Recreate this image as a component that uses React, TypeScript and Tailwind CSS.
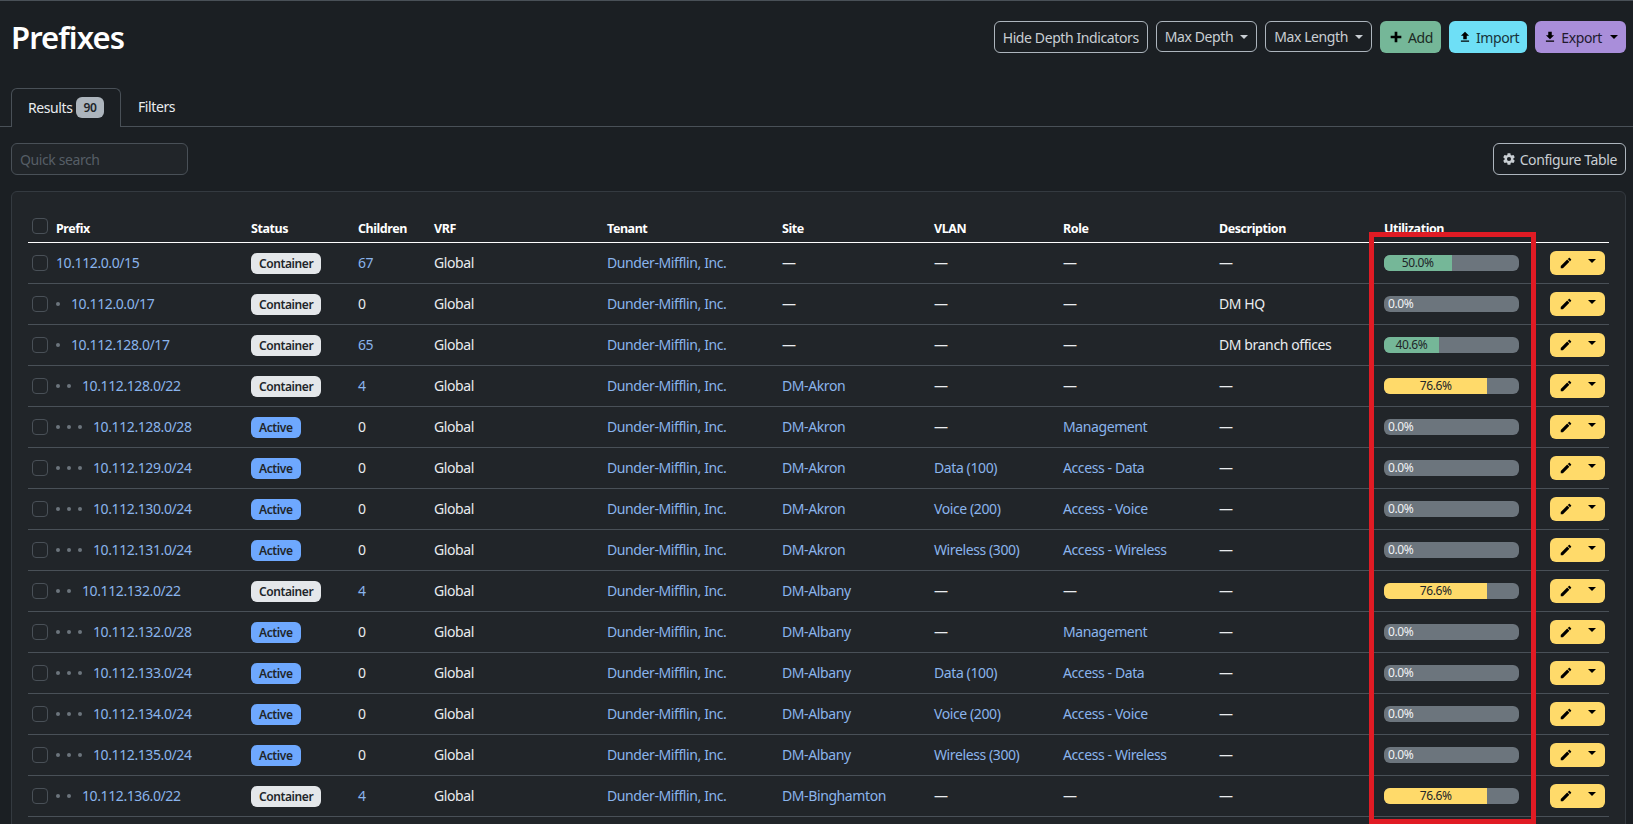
const font = { fontFamily: '"Noto Sans", "Open Sans", sans-serif' };

type Row = {
  prefix: string;
  depth: number;
  status: "Container" | "Active";
  children: number;
  site?: string;
  vlan?: string;
  role?: string;
  description?: string;
  util: number;
};

const rows: Row[] = [
  { prefix: "10.112.0.0/15", depth: 0, status: "Container", children: 67, util: 50.0 },
  { prefix: "10.112.0.0/17", depth: 1, status: "Container", children: 0, description: "DM HQ", util: 0 },
  { prefix: "10.112.128.0/17", depth: 1, status: "Container", children: 65, description: "DM branch offices", util: 40.6 },
  { prefix: "10.112.128.0/22", depth: 2, status: "Container", children: 4, site: "DM-Akron", util: 76.6 },
  { prefix: "10.112.128.0/28", depth: 3, status: "Active", children: 0, site: "DM-Akron", role: "Management", util: 0 },
  { prefix: "10.112.129.0/24", depth: 3, status: "Active", children: 0, site: "DM-Akron", vlan: "Data (100)", role: "Access - Data", util: 0 },
  { prefix: "10.112.130.0/24", depth: 3, status: "Active", children: 0, site: "DM-Akron", vlan: "Voice (200)", role: "Access - Voice", util: 0 },
  { prefix: "10.112.131.0/24", depth: 3, status: "Active", children: 0, site: "DM-Akron", vlan: "Wireless (300)", role: "Access - Wireless", util: 0 },
  { prefix: "10.112.132.0/22", depth: 2, status: "Container", children: 4, site: "DM-Albany", util: 76.6 },
  { prefix: "10.112.132.0/28", depth: 3, status: "Active", children: 0, site: "DM-Albany", role: "Management", util: 0 },
  { prefix: "10.112.133.0/24", depth: 3, status: "Active", children: 0, site: "DM-Albany", vlan: "Data (100)", role: "Access - Data", util: 0 },
  { prefix: "10.112.134.0/24", depth: 3, status: "Active", children: 0, site: "DM-Albany", vlan: "Voice (200)", role: "Access - Voice", util: 0 },
  { prefix: "10.112.135.0/24", depth: 3, status: "Active", children: 0, site: "DM-Albany", vlan: "Wireless (300)", role: "Access - Wireless", util: 0 },
  { prefix: "10.112.136.0/22", depth: 2, status: "Container", children: 4, site: "DM-Binghamton", util: 76.6 },
];

function Mdi({ d, className }: { d: string; className: string }) {
  return (
    <svg viewBox="0 0 24 24" fill="currentColor" className={className}>
      <path d={d} />
    </svg>
  );
}

const icons = {
  pencil: "M20.71,7.04C21.1,6.65 21.1,6 20.71,5.63L18.37,3.29C18,2.9 17.35,2.9 16.96,3.29L15.12,5.12L18.87,8.87M3,17.25V21H6.75L17.81,9.93L14.06,6.18L3,17.25Z",
  plus: "M20 14H14V20H10V14H4V10H10V4H14V10H20V14Z",
  upload: "M9,16V10H5L12,3L19,10H15V16H9M5,20V18H19V20H5Z",
  download: "M5,20H19V18H5M19,9H15V3H9V9H5L12,16L19,9Z",
  cog: "M12,15.5A3.5,3.5 0 0,1 8.5,12A3.5,3.5 0 0,1 12,8.5A3.5,3.5 0 0,1 15.5,12A3.5,3.5 0 0,1 12,15.5M19.43,12.97C19.47,12.65 19.5,12.33 19.5,12C19.5,11.67 19.47,11.34 19.43,11L21.54,9.37C21.73,9.22 21.78,8.95 21.66,8.73L19.66,5.27C19.54,5.05 19.27,4.96 19.05,5.05L16.56,6.05C16.04,5.66 15.5,5.32 14.87,5.07L14.5,2.42C14.46,2.18 14.25,2 14,2H10C9.75,2 9.54,2.18 9.5,2.42L9.13,5.07C8.5,5.32 7.96,5.66 7.44,6.05L4.95,5.05C4.73,4.96 4.46,5.05 4.34,5.27L2.34,8.73C2.21,8.95 2.27,9.22 2.46,9.37L4.57,11C4.53,11.34 4.5,11.67 4.5,12C4.5,12.33 4.53,12.65 4.57,12.97L2.46,14.63C2.27,14.78 2.21,15.05 2.34,15.27L4.34,18.73C4.46,18.95 4.73,19.03 4.95,18.95L7.44,17.94C7.96,18.34 8.5,18.68 9.13,18.93L9.5,21.58C9.54,21.82 9.75,22 10,22H14C14.25,22 14.46,21.82 14.5,21.58L14.87,18.93C15.5,18.67 16.04,18.34 16.56,17.94L19.05,18.95C19.27,19.03 19.54,18.95 19.66,18.73L21.66,15.27C21.78,15.05 21.73,14.78 21.54,14.63L19.43,12.97Z",
};

function Caret({ className = "" }: { className?: string }) {
  return <span className={`inline-block h-0 w-0 border-x-[4px] border-t-[4.5px] border-x-transparent border-t-current ${className}`} />;
}

function Checkbox({ className = "" }: { className?: string }) {
  return <span className={`block h-4 w-4 rounded-[4px] border border-[#495057] bg-[#212529] ${className}`} />;
}

function Progress({ util }: { util: number }) {
  const label = `${util.toFixed(1)}%`;
  const fill = util >= 75 ? "bg-[#ffda6a]" : "bg-[#75b798]";
  return (
    <div className="flex h-4 w-[135px] overflow-hidden rounded-md bg-[#6c757d] text-[12px] leading-4 tracking-[-0.03em]">
      {util > 0 ? (
        <div className={`${fill} text-center text-[#212529]`} style={{ width: `${util}%` }}>
          {label}
        </div>
      ) : (
        <div className="pl-1 text-[#f0f2f4]">{label}</div>
      )}
    </div>
  );
}

function Dash() {
  return <span className="text-[#e9ecef]">—</span>;
}

function LinkOrDash({ value }: { value?: string }) {
  return value ? <span className="text-[#8ab4ec]">{value}</span> : <Dash />;
}

export default function App() {
  return (
    <div style={font} className="relative h-[824px] overflow-hidden border-t border-[#495057] bg-[#1b1f23] tracking-[-0.025em] text-[#e9ecef]">
      {/* Page header */}
      <div className="flex items-start justify-between pl-[11px] pr-[7px] pt-5">
        <h1 className="-mt-[2px] text-[31px] leading-[36px] font-semibold tracking-[-0.03em] text-white">Prefixes</h1>
        <div className="flex items-start gap-2 text-[14px] leading-[21px] text-[#c9ced3]">
          <button className="h-8 rounded-md border border-[#adb5bd] px-2">Hide Depth Indicators</button>
          <button className="flex h-[31px] items-center gap-[7px] rounded-md border border-[#adb5bd] px-2">
            Max Depth <Caret />
          </button>
          <button className="flex h-[31px] items-center gap-[7px] rounded-md border border-[#adb5bd] px-2">
            Max Length <Caret />
          </button>
          <button className="flex h-8 items-center gap-1 rounded-md bg-[#75b798] px-2 text-[#1c2a23]">
            <Mdi d={icons.plus} className="h-4 w-4 text-black" /> Add
          </button>
          <button className="flex h-8 items-center gap-1 rounded-md bg-[#6edff6] pl-[9px] pr-2 text-[#16333a]">
            <Mdi d={icons.upload} className="h-3.5 w-3.5 text-black" /> Import
          </button>
          <button className="flex h-8 items-center gap-1 rounded-md bg-[#a98eda] px-2 text-[#211a2e]">
            <Mdi d={icons.download} className="h-3.5 w-3.5 text-black" /> Export <Caret className="ml-1 text-black" />
          </button>
        </div>
      </div>

      {/* Tabs */}
      <div className="mt-[33px] flex h-[39px] items-end border-b border-[#495057] pl-[11px] text-[14px] text-[#e9ecef]">
        <div className="-mb-px flex h-[39px] w-[110px] items-center gap-[3px] rounded-t-md border border-b-0 border-[#495057] bg-[#1b1f23] pl-4 pb-px">
          Results
          <span className="h-[21px] rounded-md bg-[#adb5bd] px-2 text-[12px] leading-[21px] font-semibold text-[#212529]">90</span>
        </div>
        <div className="flex h-[39px] items-center pl-[17px]">Filters</div>
      </div>

      {/* Table controls */}
      <div className="flex items-center justify-between pl-[11px] pr-[7px] pt-4">
        <div className="flex h-8 w-[177px] items-center rounded-md border border-[#495057] bg-[#212529] px-2 text-[14px] text-[#565e66]">
          Quick search
        </div>
        <button className="flex h-8 items-center gap-1 rounded-md border border-[#adb5bd] px-2 text-[14px] text-[#c9ced3]">
          <Mdi d={icons.cog} className="h-3.5 w-3.5" /> Configure Table
        </button>
      </div>

      {/* Table card */}
      <div className="ml-[11px] mr-[7px] mt-4 rounded-md border border-[#343a40] bg-[#212529] px-4 pb-10 pt-4">
        <table className="w-[1581px] table-fixed text-left text-[14px]">
          <colgroup>
            <col className="w-[223px]" />
            <col className="w-[107px]" />
            <col className="w-[76px]" />
            <col className="w-[173px]" />
            <col className="w-[175px]" />
            <col className="w-[152px]" />
            <col className="w-[129px]" />
            <col className="w-[156px]" />
            <col className="w-[165px]" />
            <col className="w-[166px]" />
            <col className="w-[59px]" />
          </colgroup>
          <thead>
            <tr className="h-[34px] border-b border-white align-bottom text-[12.5px] text-white">
              <th className="pb-[3px] pl-1 font-bold">
                <div className="flex items-end gap-2">
                  <Checkbox className="mb-[5px]" />
                  <span className="tracking-[-0.035em]">Prefix</span>
                </div>
              </th>
              <th className="pb-[3px] font-bold tracking-[-0.035em]">Status</th>
              <th className="pb-[3px] font-bold tracking-[-0.035em]">Children</th>
              <th className="pb-[3px] font-bold tracking-[-0.035em]">VRF</th>
              <th className="pb-[3px] font-bold tracking-[-0.035em]">Tenant</th>
              <th className="pb-[3px] font-bold tracking-[-0.035em]">Site</th>
              <th className="pb-[3px] font-bold tracking-[-0.035em]">VLAN</th>
              <th className="pb-[3px] font-bold tracking-[-0.035em]">Role</th>
              <th className="pb-[3px] font-bold tracking-[-0.035em]">Description</th>
              <th className="pb-[3px] font-bold tracking-[-0.035em]">Utilization</th>
              <th />
            </tr>
          </thead>
          <tbody>
            {rows.map((r) => (
              <tr key={r.prefix} className="h-[41px] border-b border-[#495057]">
                <td className="pl-1">
                  <div className="flex items-center">
                    <Checkbox />
                    <span className="ml-2 flex items-center">
                      {Array.from({ length: r.depth }).map((_, i) => (
                        <span key={i} className="mr-[7px] h-1 w-1 rounded-full bg-[#6c757d]" />
                      ))}
                    </span>
                    <span className={`text-[#8ab4ec] ${r.depth > 0 ? "ml-1" : ""}`}>{r.prefix}</span>
                  </div>
                </td>
                <td>
                  <span
                    className={`inline-block h-[21px] rounded-md px-2 text-[12px] leading-[21px] font-semibold text-[#212529] ${
                      r.status === "Active" ? "bg-[#6ea8fe]" : "bg-[#e4e7ea]"
                    }`}
                  >
                    {r.status}
                  </span>
                </td>
                <td>{r.children > 0 ? <span className="text-[#8ab4ec]">{r.children}</span> : r.children}</td>
                <td>Global</td>
                <td className="text-[#8ab4ec]">Dunder-Mifflin, Inc.</td>
                <td><LinkOrDash value={r.site} /></td>
                <td><LinkOrDash value={r.vlan} /></td>
                <td><LinkOrDash value={r.role} /></td>
                <td>{r.description ? r.description : <Dash />}</td>
                <td><Progress util={r.util} /></td>
                <td>
                  <div className="flex h-6 w-[55px] items-center justify-between rounded-md bg-[#ffda6a] pl-[9px] pr-[9px] text-black">
                    <Mdi d={icons.pencil} className="h-3.5 w-3.5" />
                    <Caret className="mb-[3px]" />
                  </div>
                </td>
              </tr>
            ))}
          </tbody>
        </table>
      </div>

      {/* Highlight box drawn over the screenshot */}
      <div className="absolute left-[1369px] top-[231px] h-[592px] w-[167px] border-[5px] border-[#e01b24]" />
    </div>
  );
}
